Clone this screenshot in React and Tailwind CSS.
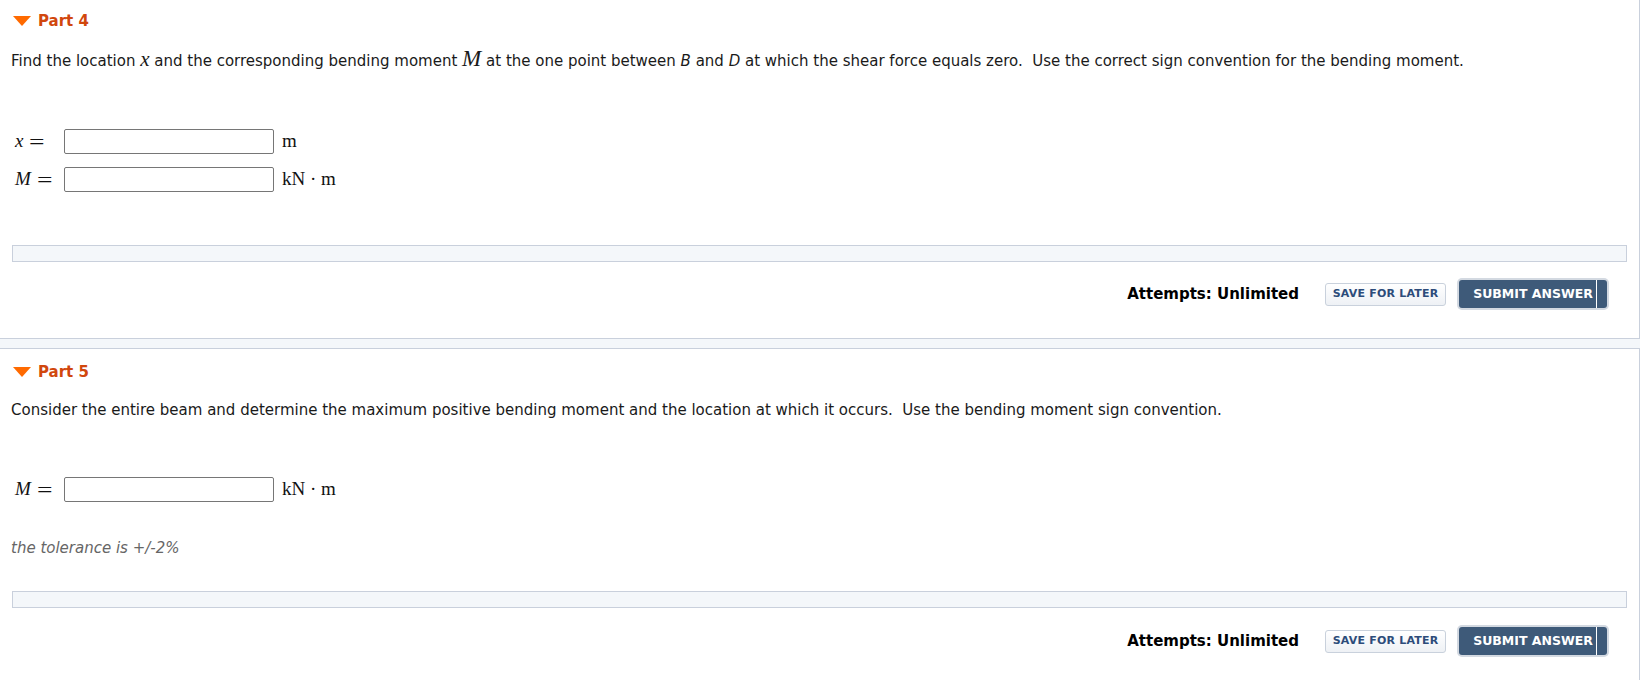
import React from 'react';

const verdana = { fontFamily: '"DejaVu Sans", Verdana, sans-serif' };
const serif = { fontFamily: '"Liberation Serif", "Times New Roman", serif' };

const PartHeader = ({ label }) => (
  <div className="flex items-center h-[20px] pl-[13px]">
    <svg width="18" height="10" viewBox="0 0 18 10" className="mr-[7px]">
      <polygon points="0,0 18,0 9,10" fill="#ff6a00" />
    </svg>
    <span className="text-[15px] font-bold text-[#d1470d]" style={verdana}>{label}</span>
  </div>
);

const AnswerRow = ({ name, unit }) => (
  <div className="flex items-center h-[25px]">
    <div className="w-[52px] pl-[3px] flex items-center text-[19px] text-[#111] whitespace-nowrap" style={serif}>
      <i>{name}</i>
      <span className="ml-[6px] inline-block text-[22px] leading-none scale-x-125 origin-left">=</span>
    </div>
    <div className="w-[210px] h-[25px] border border-[#767676] rounded-[2px] bg-white" />
    <div className="ml-[8px] text-[19px] text-[#111]" style={serif}>{unit}</div>
  </div>
);

const FeedbackBar = () => (
  <div className="ml-[12px] mr-[12px] h-[17px] border border-[#c9d0dc] bg-[#f4f7fa]" />
);

const ActionRow = () => (
  <div className="flex items-center justify-end pr-[32px]">
    <span className="text-[15px] font-bold text-black mr-[26px]" style={verdana}>Attempts: Unlimited</span>
    <button
      className="h-[23px] w-[121px] rounded-[3px] border border-[#c9d1dc] bg-gradient-to-b from-white to-[#eef1f5] text-[11px] font-bold text-[#2d4c7a] tracking-[0.2px]"
      style={verdana}
    >
      SAVE FOR LATER
    </button>
    <button
      className="relative ml-[13px] h-[28px] w-[148px] rounded-[3px] bg-[#3e5a79] text-[12.5px] font-bold text-white shadow-[0_0_0_2px_#d3d9e1]"
      style={verdana}
    >
      SUBMIT ANSWER
      <span className="absolute right-[10px] top-0 bottom-0 w-px bg-white" />
    </button>
  </div>
);

export default function App() {
  return (
    <div className="w-[1640px] h-[680px] bg-white overflow-hidden text-[#222]" style={verdana}>
      {/* Part 4 */}
      <section className="h-[338px] border-r border-[#c9d0dc] flex flex-col pt-[11px]">
        <PartHeader label="Part 4" />
        <p className="mt-[18px] pl-[11px] text-[15px] leading-[20px] text-[#1a1a1a]">
          Find the location <i className="text-[21px]" style={serif}>x</i> and the corresponding bending moment{' '}
          <i className="text-[23px]" style={serif}>M</i> at the one point between <i>B</i> and <i>D</i> at which the shear force equals zero.&nbsp; Use the correct sign convention for the bending moment.
        </p>
        <div className="mt-[58px] pl-[12px] flex flex-col gap-[13px]">
          <AnswerRow name="x" unit="m" />
          <AnswerRow name="M" unit="kN · m" />
        </div>
        <div className="mt-[53px]">
          <FeedbackBar />
        </div>
        <div className="mt-[18px]">
          <ActionRow />
        </div>
      </section>

      {/* divider */}
      <div className="h-[11px] border-y border-[#c9d0dc] bg-[#f4f7fa]" />

      {/* Part 5 */}
      <section className="h-[331px] border-r border-[#c9d0dc] flex flex-col pt-[13px]">
        <PartHeader label="Part 5" />
        <p className="mt-[18px] pl-[11px] text-[15px] leading-[20px] text-[#1a1a1a]">
          Consider the entire beam and determine the maximum positive bending moment and the location at which it occurs.&nbsp; Use the bending moment sign convention.
        </p>
        <div className="mt-[57px] pl-[12px]">
          <AnswerRow name="M" unit="kN · m" />
        </div>
        <p className="mt-[36px] pl-[11px] text-[15px] leading-[20px] italic text-[#666]">the tolerance is +/-2%</p>
        <div className="mt-[33px]">
          <FeedbackBar />
        </div>
        <div className="mt-[19px]">
          <ActionRow />
        </div>
      </section>
    </div>
  );
}
